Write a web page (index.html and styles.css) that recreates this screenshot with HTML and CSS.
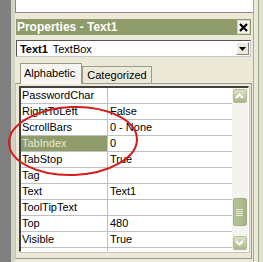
FILE: index.html
```html
<!DOCTYPE html>
<html>
  <head>
    <title>Properties - Text1</title>
    <link rel="stylesheet" href="styles.css">
  </head>
  <body>
  <div class="screen">
    <div class="side-strip"></div>
    <div class="side-edge"></div>
    <div class="main">
      <div class="code-pane"></div>
      <div class="title-bar">
        <span class="title-text">Properties - Text1</span>
        <span class="close-btn"><svg width="9" height="9" viewBox="0 0 9 9"><path d="M1 1L8 8M8 1L1 8" stroke="#000" stroke-width="2.2"/></svg></span>
      </div>
      <div class="combo">
        <span class="combo-text"><b>Text1</b> TextBox</span>
        <span class="combo-btn"><svg width="7" height="4" viewBox="0 0 7 4"><path d="M0 0H7L3.5 4Z" fill="#000"/></svg></span>
      </div>
      <div class="tabs">
        <div class="tab active">Alphabetic</div>
        <div class="tab">Categorized</div>
      </div>
      <div class="tab-page">
        <div class="grid">
          <div class="rows">
            <div class="row"><div class="name">PasswordChar</div><div class="value"></div></div>
            <div class="row"><div class="name">RightToLeft</div><div class="value">False</div></div>
            <div class="row"><div class="name">ScrollBars</div><div class="value">0 - None</div></div>
            <div class="row selected"><div class="name">TabIndex</div><div class="value">0</div></div>
            <div class="row"><div class="name">TabStop</div><div class="value">True</div></div>
            <div class="row"><div class="name">Tag</div><div class="value"></div></div>
            <div class="row"><div class="name">Text</div><div class="value">Text1</div></div>
            <div class="row"><div class="name">ToolTipText</div><div class="value"></div></div>
            <div class="row"><div class="name">Top</div><div class="value">480</div></div>
            <div class="row"><div class="name">Visible</div><div class="value">True</div></div>
            <div class="row"><div class="name">WhatsThisHelpID</div><div class="value">0</div></div>
          </div>
          <div class="scrollbar">
            <div class="sb-btn"><svg width="9" height="6" viewBox="0 0 9 6"><path d="M1 5L4.5 1.5L8 5" fill="none" stroke="#fff" stroke-width="2"/></svg></div>
            <div class="sb-track">
              <div class="sb-thumb"><svg width="7" height="7" viewBox="0 0 7 7"><path d="M0 0.5H7M0 2.5H7M0 4.5H7M0 6.5H7" stroke="#e8eed8" stroke-width="1"/></svg></div>
            </div>
            <div class="sb-btn"><svg width="9" height="6" viewBox="0 0 9 6"><path d="M1 1L4.5 4.5L8 1" fill="none" stroke="#fff" stroke-width="2"/></svg></div>
          </div>
        </div>
      </div>
    </div>
    <div class="right-edge"></div>
  </div>
  <svg class="circle-mark" width="263" height="262" viewBox="0 0 263 262">
    <ellipse cx="73" cy="141" rx="64" ry="34" transform="rotate(-2 73 141)" fill="none" stroke="#d41c1c" stroke-width="2"/>
  </svg>
  </body>
</html>
```

FILE: styles.css
```css
html, body {
  margin: 0;
  padding: 0;
}

body {
  width: 263px;
  height: 262px;
  overflow: hidden;
  position: relative;
  background-color: #ece9d8;
  font-family: "Liberation Sans", Arial, sans-serif;
  font-size: 11px;
  color: #000;
}

.screen {
  display: flex;
  height: 262px;
}

.side-strip {
  width: 11px;
  background-color: #808080;
}

.side-edge {
  width: 4px;
  background-color: #d6d3c6;
}

.main {
  width: 239px;
  display: flex;
  flex-direction: column;
}

.code-pane {
  height: 12px;
  background-color: #fff;
  border-left: 1px solid #8a8a8a;
  border-bottom: 1px solid #8a8a8a;
  margin-bottom: 6px;
}

.title-bar {
  height: 16px;
  margin: 0 2px 0 1px;
  background-color: #8e9c6c;
  display: flex;
  align-items: center;
  justify-content: space-between;
}

.title-text {
  color: #fff;
  font-weight: bold;
  font-size: 12px;
  padding-left: 1px;
}

.close-btn {
  width: 11px;
  height: 12px;
  margin-right: 1px;
  background-color: #f4f3ee;
  border: 1px solid #d8d8c8;
  display: flex;
  align-items: center;
  justify-content: center;
}

.combo {
  height: 15px;
  margin: 5px 2px 0 1px;
  background-color: #fff;
  border: 1px solid #555;
  border-right-color: #c8c8c8;
  border-bottom-color: #c8c8c8;
  display: flex;
  align-items: center;
  justify-content: space-between;
}

.combo-text {
  padding-left: 3px;
}

.combo-text b {
  margin-right: 2px;
}

.combo-btn {
  width: 11px;
  height: 11px;
  margin-right: 1px;
  background-color: #ece9d8;
  border: 1px solid #fff;
  border-right-color: #808080;
  border-bottom-color: #808080;
  display: flex;
  align-items: center;
  justify-content: center;
}

.tabs {
  display: flex;
  align-items: flex-end;
  margin: 5px 0 0 5px;
  height: 21px;
}

.tab {
  height: 16px;
  padding: 0 4px;
  line-height: 16px;
  border: 1px solid #9a9a8a;
  border-bottom: none;
  background-color: #ece9d8;
}

.tab.active {
  height: 20px;
  line-height: 19px;
  background-color: #f6f5ef;
  position: relative;
  top: 1px;
  padding: 0 6px 0 3px;
}

.tab-page {
  height: 172px;
  margin-right: 1px;
  border: 1px solid #9a9a8a;
  border-left-color: #c4c2b4;
  padding: 2px 2px 0 3px;
}

.grid {
  height: 163px;
  display: flex;
  border-top: 2px solid #404040;
  border-left: 2px solid #404040;
  border-right: 1px solid #fff;
  border-bottom: 1px solid #fff;
  box-shadow: 1px 1px 0 #c8c4b4;
  background-color: #fff;
  overflow: hidden;
}

.rows {
  width: 211px;
  overflow: hidden;
}

.row {
  display: flex;
  height: 15px;
  border-bottom: 1px solid #c0c0c0;
  line-height: 15px;
  white-space: nowrap;
}

.name {
  width: 85px;
  padding-left: 1px;
  border-right: 1px solid #c0c0c0;
  overflow: hidden;
}

.value {
  flex: 1;
  padding-left: 2px;
}

.row.selected .name {
  background-color: #8e9c6c;
  color: #e4ead6;
}

.scrollbar {
  width: 16px;
  background-color: #f4f3ee;
  display: flex;
  flex-direction: column;
  align-items: center;
  padding-top: 1px;
}

.sb-btn {
  width: 12px;
  height: 12px;
  border: 1px solid #b4bf98;
  border-radius: 2px;
  background: linear-gradient(#dbe3c4, #a9b78a);
  display: flex;
  align-items: center;
  justify-content: center;
}

.sb-track {
  height: 133px;
  width: 14px;
  display: flex;
  flex-direction: column;
  align-items: center;
}

.sb-thumb {
  margin-top: 95px;
  width: 12px;
  height: 26px;
  border: 1px solid #a2ae84;
  border-radius: 2px;
  background: linear-gradient(90deg, #b7c49a, #a5b387);
  display: flex;
  align-items: center;
  justify-content: center;
}

.right-edge {
  width: 9px;
  border-left: 1px solid #a8a89c;
  background: linear-gradient(90deg, #ece9d8 0, #ece9d8 4px, #9aa684 4px, #9aa684 5px, #dfe4cf 5px);
}

.circle-mark {
  position: absolute;
  left: 0;
  top: 0;
  pointer-events: none;
}
```
